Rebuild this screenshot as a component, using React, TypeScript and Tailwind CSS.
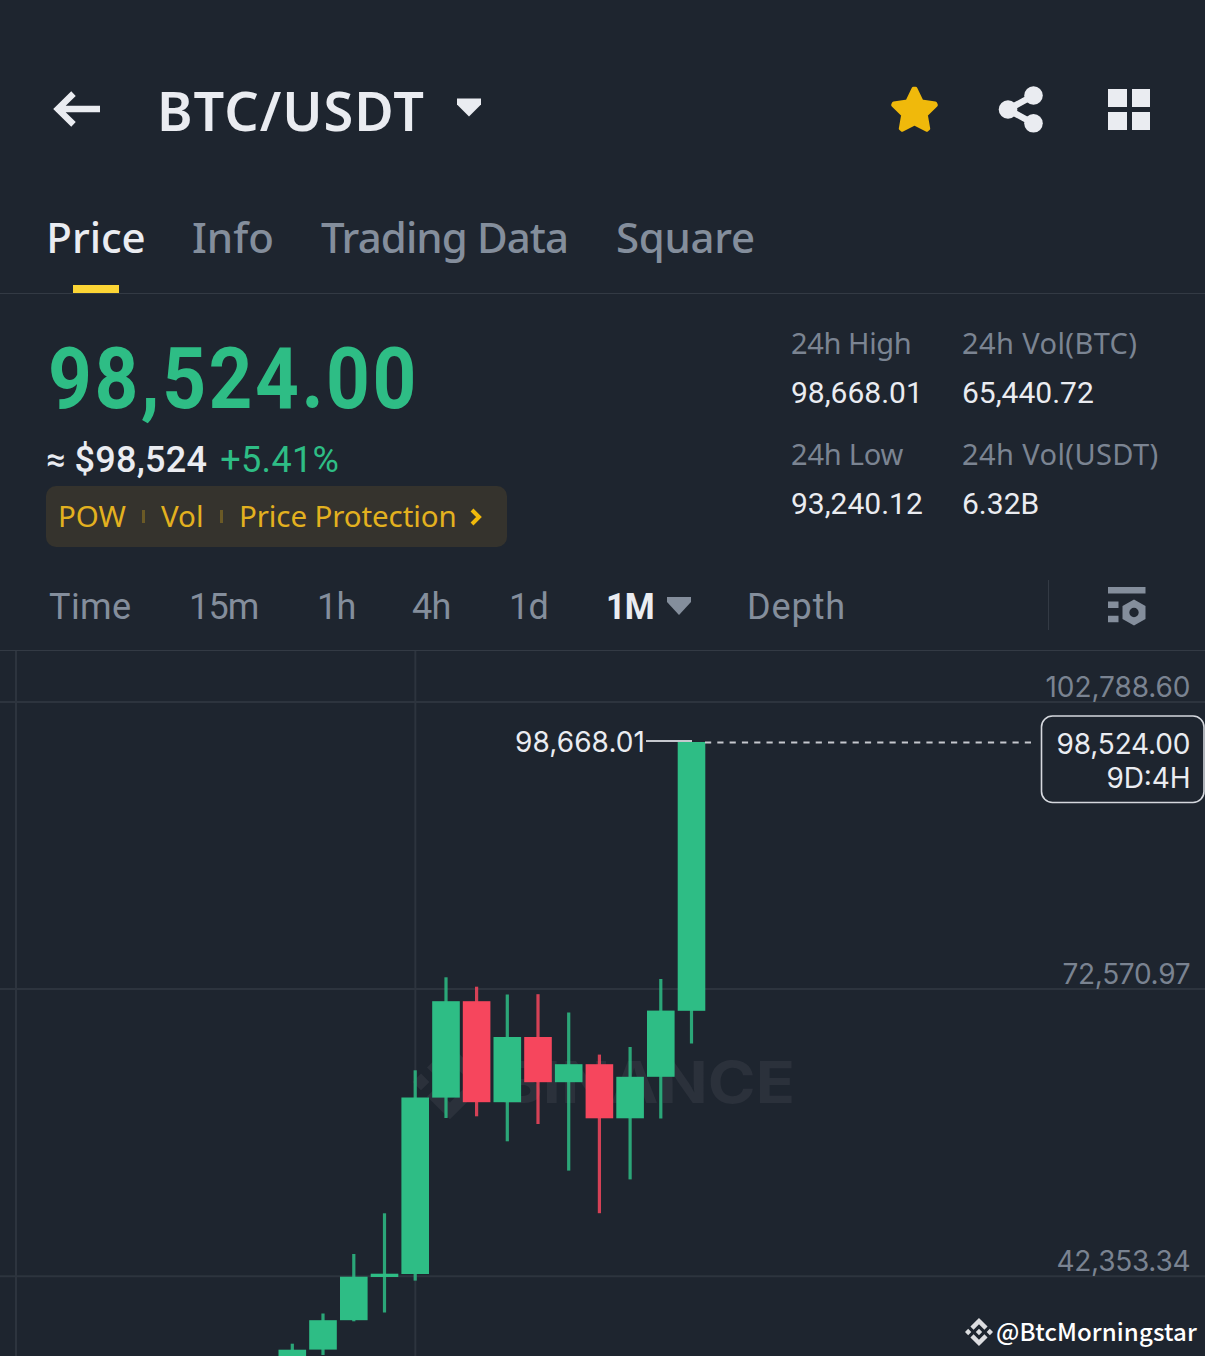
import React from 'react'

const UP = '#2ebd85'
const DOWN = '#f6465d'
const CHART_TOP = 651

// [centre x, wick top, body top, body bottom, wick bottom, colour]
const candles: [number, number, number, number, number, string][] = [
  [292.3, 1343.7, 1349.7, 1358, 1358, UP],
  [323, 1313.5, 1320.2, 1349.6, 1355, UP],
  [353.8, 1254, 1276.7, 1320.2, 1321.3, UP],
  [384.5, 1213.3, 1273.7, 1277, 1312.5, UP],
  [415.2, 1070.3, 1097.5, 1274, 1280.6, UP],
  [446, 977.3, 1001.2, 1097.6, 1118, UP],
  [476.6, 986.7, 1001.2, 1102.2, 1116.3, DOWN],
  [507.3, 994.5, 1037, 1102.2, 1141.3, UP],
  [538, 994.2, 1037, 1082.2, 1124, DOWN],
  [568.7, 1012.5, 1064.2, 1082.2, 1170.6, UP],
  [599.4, 1054.6, 1064.2, 1118.3, 1213.2, DOWN],
  [630.1, 1047, 1076.8, 1118.3, 1179.4, UP],
  [660.8, 979, 1010.6, 1076.8, 1118.5, UP],
  [691.5, 742, 742, 1010.8, 1043.5, UP],
]

const LOGO =
  'M16.624 13.9202l2.7175 2.7154-7.353 7.353-7.353-7.352 2.7175-2.7164 4.6355 4.6595 4.6356-4.6595zm4.6366-4.6366L24 12l-2.7154 2.7164L18.5682 12l2.6924-2.7164zm-9.272.001l2.7163 2.6914-2.7164 2.7174v-.001L9.2721 12l2.7164-2.7154zm-9.2722-.001L5.4088 12l-2.6914 2.6924L0 12l2.7164-2.7164zM11.9885.0115l7.353 7.329-2.7174 2.7154-4.6356-4.6356-4.6355 4.6595-2.7174-2.7154 7.353-7.353z'

function Header() {
  return (
    <header className="flex h-[182px] items-center pt-[37px] pl-[53px] pr-[55px] text-[#eaecf1]">
      <svg className="-mt-[2px] h-9 w-[47px]" viewBox="0 0 47 36" fill="none" stroke="currentColor" strokeWidth="6.4">
        <path d="M20.5 2.6 4.8 18l15.700 15.400M5 18h42" />
      </svg>
      <h1 className="ml-[57px] w-[300px] text-[54px] leading-none font-semibold tracking-[1px] whitespace-nowrap">BTC/USDT</h1>
      <svg className="-mt-[4px] h-[19px] w-6" viewBox="0 0 24 19" fill="currentColor">
        <path d="M0 .5h24v6L12 18.500 0 6.500z" />
      </svg>
      <div className="ml-auto flex items-center">
        <svg className="h-[47px] w-[47px]" viewBox="0 0 47 47" fill="#f0b90b" stroke="#f0b90b" strokeWidth="4" strokeLinejoin="round">
          <path d="M22.500 2.800h2l6 12.600 13.700 2.100.6 1.500-10 9.800 2.400 13.800-1.400 1.200L23.500 37.500l-12.300 6.300-1.400-1.200 2.400-13.800-10-9.800.6-1.500 13.700-2.100z" />
        </svg>
        <svg className="ml-[60px] h-[47px] w-[46px]" viewBox="0 0 46 47" fill="currentColor" stroke="currentColor">
          <path d="M35.500 9.500 10 23.500l25.500 14" fill="none" strokeWidth="6.500" />
          <g stroke="none">
            <circle cx="10" cy="23.500" r="9.300" />
            <circle cx="35.500" cy="9.500" r="9.300" />
            <circle cx="35.500" cy="37.300" r="9.300" />
          </g>
        </svg>
        <div className="ml-[64px] grid grid-cols-2 gap-[5px]">
          <i className="h-[18px] w-[18.500px] bg-[#eaecf1]" />
          <i className="h-[18px] w-[18.500px] bg-[#eaecf1]" />
          <i className="h-[18px] w-[18.500px] bg-[#eaecf1]" />
          <i className="h-[18px] w-[18.500px] bg-[#eaecf1]" />
        </div>
      </div>
    </header>
  )
}

function Tabs() {
  return (
    <nav className="flex h-[112px] border-b border-[#333a44] pl-[47px] text-[42px] leading-[110px] font-medium whitespace-nowrap text-[#848e9c]">
      <div className="flex w-[98px] flex-col items-center text-[#eaecf1]">
        <span className="h-[103px]">Price</span>
        <i className="h-2 w-[46px] shrink-0 bg-[#fcd535]" />
      </div>
      <span className="ml-[47px] w-[82px]">Info</span>
      <span className="ml-[47px] w-[247px] tracking-[-0.9px]">Trading Data</span>
      <span className="ml-[48px] tracking-[-0.3px]">Square</span>
    </nav>
  )
}

function Stat({ label, value, className = '' }: { label: string; value: string; className?: string }) {
  return (
    <div className="h-[111px] whitespace-nowrap">
      <div className={`text-[29px] leading-[48px] text-[#7b8492] ${className}`}>{label}</div>
      <div className="font-[Roboto] text-[30px] leading-[52px] text-[#eaecf1]">{value}</div>
    </div>
  )
}

function Summary() {
  return (
    <section className="flex h-[270px] justify-between pl-[46px] pr-[40px]">
      <div className="pt-[35px] font-[Roboto]">
        <div className="ml-[2px] w-[400px] origin-left scale-x-90 text-[85px] leading-[100px] font-bold tracking-[2.800px] text-[#2ebd85]">98,524.00</div>
        <div className="flex h-[57px] items-center pt-[4px] text-[36px] font-medium whitespace-nowrap text-[#eaecf1]">
          <span className="mr-[9px] text-[34px]">≈</span>
          <span className="tracking-[0.3px]">$98,524</span>
          <span className="ml-[13px] font-normal tracking-[0.3px] text-[#2ebd85]">+5.41%</span>
        </div>
        <div className="flex h-[61px] w-[461px] items-center rounded-[10px] bg-[#35332d] pl-[12px] font-['Noto_Sans'] text-[29.500px] whitespace-nowrap text-[#e3b11f]">
          <span className="w-[68px]">POW</span>
          <i className="mx-4 h-[13px] w-[3px] bg-[#6b5a26]" />
          <span className="w-[43px]">Vol</span>
          <i className="mx-4 h-[13px] w-[3px] bg-[#6b5a26]" />
          <span className="w-[218px] tracking-[-0.1px]">Price Protection</span>
          <svg className="ml-[13px] h-[18px] w-3" viewBox="0 0 12 18" fill="none" stroke="#f0b90b" strokeWidth="4">
            <path d="M2 2l7 7-7 7" />
          </svg>
        </div>
      </div>
      <div className="flex pt-[25px]">
        <div className="w-[171px]">
          <Stat label="24h High" value="98,668.01" className="tracking-[-0.4px]" />
          <Stat label="24h Low" value="93,240.12" className="tracking-[-0.2px]" />
        </div>
        <div className="w-[203px]">
          <Stat label="24h Vol(BTC)" value="65,440.72" className="tracking-[0.4px]" />
          <Stat label="24h Vol(USDT)" value="6.32B" className="tracking-[0.4px]" />
        </div>
      </div>
    </section>
  )
}

function Intervals() {
  return (
    <nav className="flex h-[87px] items-center border-b border-[#333a44] pl-[49px] font-[Roboto] text-[36px] whitespace-nowrap text-[#848e9c]">
      <span className="w-[140px] tracking-[0.4px]">Time</span>
      <span className="w-[128px] tracking-[-0.8px]">15m</span>
      <span className="w-[95px] tracking-[-0.8px]">1h</span>
      <span className="w-[97px] tracking-[-0.8px]">4h</span>
      <span className="w-[97px] tracking-[-0.8px]">1d</span>
      <span className="w-[61px] origin-left scale-x-95 font-bold tracking-[-1px] text-[#eaecf1]">1M</span>
      <svg className="-mt-[2px] h-[18px] w-6" viewBox="0 0 24 18" fill="currentColor">
        <path d="M0 0h24v5L12 18 0 5z" />
      </svg>
      <span className="ml-[56px] w-[301px] tracking-[0.9px]">Depth</span>
      <i className="-mt-[4px] h-[50px] w-px bg-[#333a44]" />
      <svg className="-mt-[2px] ml-[59px] h-[39px] w-[38px]" viewBox="0 0 38 39" fill="currentColor">
        <path d="M0 0h37.500v6.500H0zM0 14.500h10.500v6.500H0zM0 28.700h10.500v6.500H0z" />
        <path fillRule="evenodd" d="M26 12.500 37.500 19v13L26 38.500 14.500 32V19zM26 20.800a4.700 4.700 0 1 0 0 9.400a4.700 4.700 0 0 0 0-9.400z" />
      </svg>
    </nav>
  )
}

function Chart() {
  return (
    <div className="relative h-[705px]">
      <svg className="block h-[705px] w-[1205px] font-[Inter]" viewBox={`0 ${CHART_TOP} 1205 705`}>
        <g stroke="#2d343e" strokeWidth="2">
          <path d="M16 651v705M415.300 651v705M0 702h1205M0 989h1205M0 1276.300h1205" />
        </g>
        <g fill="#2b313b">
          <path transform="translate(412.500 1044.500) scale(3.120)" d={LOGO} />
          <text x="500" y="1103" fontSize="58" fontWeight="700" textLength="295" lengthAdjust="spacingAndGlyphs">BINANCE</text>
        </g>
        {candles.map(([x, high, top, bottom, low, color]) => (
          <g key={x} fill={color}>
            <rect x={x - 1.6} y={high} width={3.2} height={low - high} opacity={0.85} />
            <rect x={x - 13.8} y={top} width={27.6} height={bottom - top} />
          </g>
        ))}
        <path d="M646 741h46" stroke="#c5c8ce" strokeWidth="2" />
        <path d="M705 742.500h326" stroke="#c5c8ce" strokeWidth="2" strokeDasharray="6.200 6.100" />
        <text x="515" y="752" fontSize="28" fill="#eaecf1" textLength="130">98,668.01</text>
        <g fontSize="28" fill="#848e9c" textAnchor="end" className="opacity-90">
          <text x="1190.500" y="696.800" textLength="145">102,788.60</text>
          <text x="1190.500" y="984" textLength="128">72,570.97</text>
          <text x="1190.500" y="1271" textLength="134">42,353.34</text>
        </g>
        <rect x="1041.500" y="716" width="162.500" height="86.500" rx="11" fill="#1e252f" stroke="#d5d8de" strokeWidth="1.600" />
        <g fontSize="28" fill="#eaecf1" textAnchor="end">
          <text x="1190.500" y="754" textLength="134">98,524.00</text>
          <text x="1190.500" y="788" textLength="84">9D:4H</text>
        </g>
      </svg>
      <div className="absolute right-2 bottom-[5px] flex h-[38px] items-center gap-[3px] font-['Noto_Sans_CJK_SC',sans-serif] text-[24px] leading-none font-medium text-white">
        <svg className="size-7" viewBox="0 0 24 24" fill="#dcdde0">
          <path d={LOGO} />
        </svg>
        <span className="-mt-[2px] w-[201px] tracking-[0.1px] whitespace-nowrap">@BtcMorningstar</span>
      </div>
    </div>
  )
}

export default function App() {
  return (
    <div className="h-[1356px] w-[1205px] overflow-hidden bg-[#1e252f] font-['Noto_Sans',sans-serif]">
      <Header />
      <Tabs />
      <Summary />
      <Intervals />
      <Chart />
    </div>
  )
}
